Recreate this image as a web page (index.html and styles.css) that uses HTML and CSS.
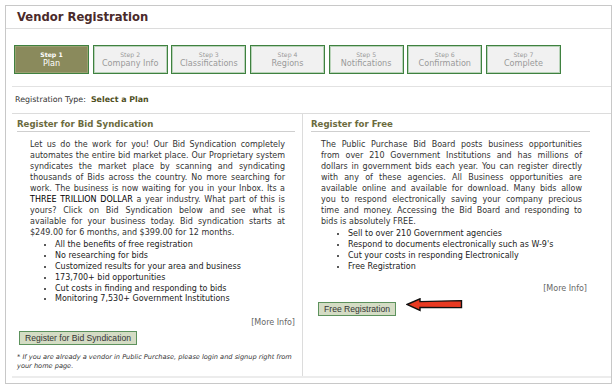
FILE: index.html
```html
<!DOCTYPE html>
<html>
<head>
<meta charset="utf-8">
<link rel="stylesheet" href="styles.css">
</head>
<body>
<div class="page">
  <div class="title">Vendor Registration</div>
  <div class="content">
    <div class="steps">
      <div class="step active"><span class="num">Step 1</span><span class="name">Plan</span></div>
      <div class="step"><span class="num">Step 2</span><span class="name">Company Info</span></div>
      <div class="step"><span class="num">Step 3</span><span class="name">Classifications</span></div>
      <div class="step"><span class="num">Step 4</span><span class="name">Regions</span></div>
      <div class="step"><span class="num">Step 5</span><span class="name">Notifications</span></div>
      <div class="step"><span class="num">Step 6</span><span class="name">Confirmation</span></div>
      <div class="step"><span class="num">Step 7</span><span class="name">Complete</span></div>
    </div>
    <div class="regtype">Registration Type:&nbsp; <b>Select a Plan</b></div>
    <div class="panels">
      <div class="panel left">
        <div class="phead">Register for Bid Syndication</div>
        <p class="desc">
          <span class="ln">Let us do the work for you! Our Bid Syndication completely</span>
          <span class="ln">automates the entire bid market place. Our Proprietary system</span>
          <span class="ln">syndicates the market place by scanning and syndicating</span>
          <span class="ln">thousands of Bids across the country. No more searching for</span>
          <span class="ln">work. The business is now waiting for you in your Inbox. Its a</span>
          <span class="ln"><span class="dark">THREE TRILLION DOLLAR</span> a year industry. What part of this is</span>
          <span class="ln">yours? Click on Bid Syndication below and see what is</span>
          <span class="ln">available for your business today. Bid syndication starts at</span>
          <span class="ln last">$249.00 for 6 months, and $399.00 for 12 months.</span>
        </p>
        <ul class="feat">
          <li>All the benefits of free registration</li>
          <li>No researching for bids</li>
          <li>Customized results for your area and business</li>
          <li>173,700+ bid opportunities</li>
          <li>Cut costs in finding and responding to bids</li>
          <li>Monitoring 7,530+ Government Institutions</li>
        </ul>
        <div class="more">[More Info]</div>
        <button class="btn btn-left">Register for Bid Syndication</button>
        <div class="note">* If you are already a vendor in Public Purchase, please login and signup right from your home page.</div>
      </div>
      <div class="panel right">
        <div class="phead">Register for Free</div>
        <p class="desc">
          <span class="ln">The Public Purchase Bid Board posts business opportunities</span>
          <span class="ln">from over 210 Government Institutions and has millions of</span>
          <span class="ln">dollars in government bids each year. You can register directly</span>
          <span class="ln">with any of these agencies. All Business opportunities are</span>
          <span class="ln">available online and available for download. Many bids allow</span>
          <span class="ln">you to respond electronically saving your company precious</span>
          <span class="ln">time and money. Accessing the Bid Board and responding to</span>
          <span class="ln last">bids is absolutely FREE.</span>
        </p>
        <ul class="feat">
          <li>Sell to over 210 Government agencies</li>
          <li>Respond to documents electronically such as W-9's</li>
          <li>Cut your costs in responding Electronically</li>
          <li>Free Registration</li>
        </ul>
        <div class="more">[More Info]</div>
        <button class="btn btn-right">Free Registration</button>
        <svg class="arrow" width="57" height="14" viewBox="0 0 57 14">
          <polygon points="1,6.5 14,0.8 14,3.6 55.5,2.6 55.5,9.6 14,9.4 14,12.4" fill="#e83a22" stroke="#111" stroke-width="1.4" stroke-linejoin="miter"/>
        </svg>
      </div>
    </div>
  </div>
</div>
</body>
</html>
```
FILE: styles.css
```css
* { box-sizing: border-box; }
body {
  margin: 0;
  background: #fff;
  font-family: "DejaVu Sans", Verdana, sans-serif;
  color: #222;
}
.page {
  margin: 5px 0 0 5px;
  width: 607px;
  height: 379px;
  border: 1px solid #c8c8c8;
  display: flex;
  flex-direction: column;
}
.title {
  height: 23px;
  border-bottom: 1px solid #dcdcdc;
  padding: 3px 0 0 11px;
  font-weight: bold;
  font-size: 11.6px;
  line-height: 16px;
  color: #4a2a2a;
}
.content {
  flex: 1;
  padding-left: 6px;
  display: flex;
  flex-direction: column;
}
.steps {
  display: flex;
  gap: 3.67px;
  padding: 16px 0 12px 2px;
  border-bottom: 1px solid #e2e2e2;
}
.step {
  width: 75px;
  height: 29px;
  border: 1px solid #3f8140;
  box-shadow: inset 0 0 0 1px #b9d3b9;
  background: #f1f1f1;
  color: #9a9a9a;
  display: flex;
  flex-direction: column;
  align-items: center;
  justify-content: center;
  line-height: 1.05;
}
.step .num { font-size: 6.2px; }
.step .name { font-size: 8.1px; margin-top: 1px; }
.step.active {
  background: #8a8a5c;
  color: #fff;
  box-shadow: inset 0 0 0 1px #9aa070;
}
.step.active .num { font-weight: bold; }
.regtype {
  height: 26px;
  padding: 8px 0 0 3px;
  font-size: 7.9px;
  line-height: 10px;
  color: #333;
}
.regtype b { color: #4e4e22; }
.panels {
  flex: 1;
  display: flex;
  border-top: 1px solid #dcdcdc;
  border-bottom: 2px solid #ececec;
  margin-bottom: 5px;
}
.panel {
  position: relative;
  font-size: 8px;
}
.panel.left {
  width: 291px;
  border-right: 1px solid #dcdcdc;
  padding: 5px 7px 0 5px;
}
.panel.right {
  flex: 1;
  padding: 5px 21px 0 8px;
}
.phead {
  font-weight: bold;
  font-size: 8.6px;
  line-height: 11px;
  color: #6b6b3e;
  height: 13px;
  border-bottom: 1px solid #cfcfcf;
}
.desc {
  margin: 6.5px 10px 0 13px;
  font-size: 8px;
  line-height: 11.1px;
  color: #333;
}
.right .desc { margin: 6.5px 8px 0 10px; }
.ln {
  display: block;
  text-align: justify;
  text-align-last: justify;
}
.ln.last { text-align-last: left; }
.dark { color: #000; }
.feat {
  margin: 2px 0 0;
  padding-left: 38px;
  line-height: 10.8px;
  color: #222;
}
.right .feat { padding-left: 37px; }
.more {
  text-align: right;
  color: #666;
  margin-top: 12px;
  line-height: 11px;
}
.right .more { margin-right: 3px; margin-top: 11px; }
.btn {
  display: block;
  font-family: "Liberation Sans", Arial, sans-serif;
  font-size: 8.6px;
  color: #333;
  background: #d4dcc4;
  border: 1px solid #5d925d;
  padding: 0;
  height: 14px;
  line-height: 12px;
}
.btn-left { width: 118px; margin: 3px 0 0 2px; }
.btn-right { width: 78px; margin: 8px 0 0 7px; }
.note {
  margin-top: 8px;
  font-size: 6.6px;
  font-style: italic;
  line-height: 9px;
  color: #333;
}
.arrow {
  position: absolute;
  left: 103px;
  top: 184px;
}
```
